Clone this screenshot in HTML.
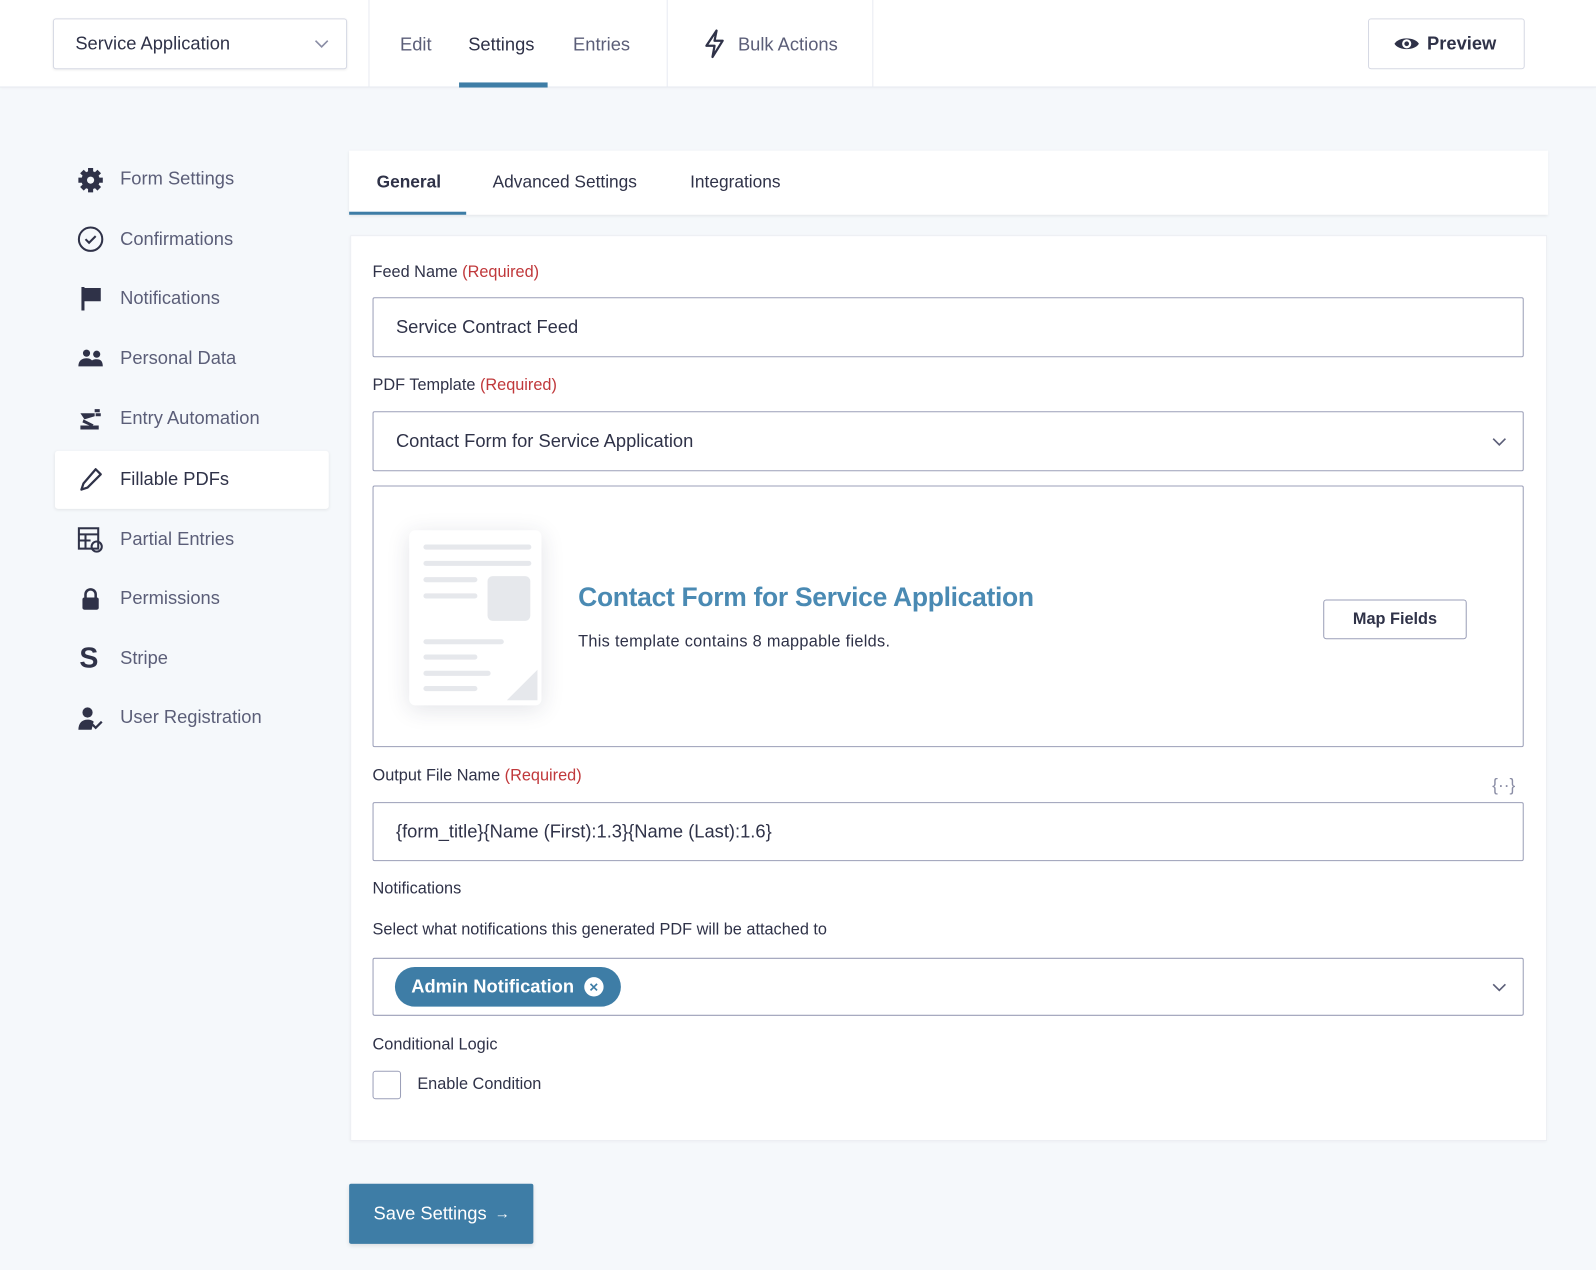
<!DOCTYPE html>
<html><head><style>
*{box-sizing:border-box;margin:0;padding:0}
html,body{width:1596px;height:1270px;overflow:hidden;background:#f5f8fb;font-family:"Liberation Sans",sans-serif;color:#2f3248}
#w{position:absolute;left:0;top:0;width:1568px;height:1248px;transform:scale(1.01786);transform-origin:0 0}
.a{position:absolute}
.hdr{left:0;top:0;width:1568px;height:86px;background:#fff;border-bottom:1px solid #e6e9f0;box-shadow:0 1px 3px rgba(0,0,0,.04)}
.vl{top:0;width:1px;height:86px;background:#e8ebf2}
.t{font-size:18px;color:#5b5e78;transform:translateY(-50%)}
.side{font-size:18px;color:#5b5e78;left:118px;transform:translateY(-50%)}
.ic{left:76px;width:26px;height:26px;transform:translateY(-50%)}
.lbl{left:366px;font-size:16px;color:#2f3248;transform:translateY(-50%)}
.req{color:#c0383b}
.inp{left:366px;width:1131px;background:#fff;border:1px solid #9b9fb8;border-radius:2px;font-size:18px;color:#2f3248;padding-left:22px;display:flex;align-items:center}
.ln{position:absolute;height:5px;background:#e6e8ec;border-radius:3px}
</style></head><body><div id="w">
<div class="a hdr"></div>
<div class="a" style="left:52px;top:18px;width:289px;height:50px;border:1px solid #d6d9e4;border-radius:3px;background:#fff;box-shadow:0 1px 2px rgba(0,0,0,.06)"></div>
<div class="a t" style="left:74px;top:43px;color:#2f3248;font-size:18px">Service Application</div>
<svg class="a" style="left:308px;top:37px" width="16" height="12"><path d="M2 3l6 6 6-6" fill="none" stroke="#8a8da5" stroke-width="1.6"/></svg>
<div class="a vl" style="left:362px"></div><div class="a vl" style="left:655px"></div><div class="a vl" style="left:857px"></div>
<div class="a t" style="left:393px;top:44px">Edit</div>
<div class="a t" style="left:460px;top:44px;color:#2f3248">Settings</div>
<div class="a t" style="left:563px;top:44px">Entries</div>
<div class="a" style="left:451px;top:81px;width:87px;height:5px;background:#3e7da6"></div>
<svg class="a" style="left:690px;top:28px" width="24" height="30" viewBox="0 0 24 30"><path d="M14 2L4 17h8l-2 11 10-16h-8z" fill="none" stroke="#2f3248" stroke-width="2.2" stroke-linejoin="round"/></svg>
<div class="a t" style="left:725px;top:44px">Bulk Actions</div>
<div class="a" style="left:1344px;top:18px;width:154px;height:50px;border:1px solid #d6d9e4;border-radius:3px;background:#fff"></div>
<svg class="a" style="left:1369px;top:33px" width="26" height="20" viewBox="0 0 26 20"><path d="M1 10C5 3 21 3 25 10C21 17 5 17 1 10Z" fill="#2f3248"/><circle cx="13" cy="10" r="4.5" fill="#fff"/><circle cx="13" cy="10" r="2.3" fill="#2f3248"/></svg>
<div class="a t" style="left:1402px;top:43px;color:#2f3248;font-weight:bold">Preview</div>

<div class="a" style="left:54px;top:443px;width:269px;height:57px;background:#fff;border-radius:3px;box-shadow:0 1px 3px rgba(0,0,0,.08)"></div>
<svg class="a ic" style="top:177px" viewBox="0 0 26 26"><circle cx="13" cy="13" r="9" fill="#2f3248"/><g stroke="#2f3248" stroke-width="5"><path d="M13 1v24M1 13h24M4.5 4.5l17 17M21.5 4.5l-17 17"/></g><circle cx="13" cy="13" r="3.5" fill="#f5f8fb"/></svg>
<div class="a side" style="top:176px">Form Settings</div>
<svg class="a ic" style="top:235px" viewBox="0 0 26 26"><circle cx="13" cy="13" r="11.5" fill="none" stroke="#2f3248" stroke-width="2"/><path d="M8 13l3.5 3.5L18 10" fill="none" stroke="#2f3248" stroke-width="2"/></svg>
<div class="a side" style="top:235px">Confirmations</div>
<svg class="a ic" style="top:293px" viewBox="0 0 26 26"><path d="M4 2h3v23H4z M7 3h16v13H7z" fill="#2f3248"/></svg>
<div class="a side" style="top:293px">Notifications</div>
<svg class="a ic" style="top:352px" viewBox="0 0 26 26"><circle cx="9" cy="8" r="3.5" fill="#2f3248"/><circle cx="19" cy="9" r="3.5" fill="#2f3248"/><path d="M1 21c0-6 4-8 8-8s7 2 7 8zM12 21c1-6 3-7 7-7s6 2 6 7z" fill="#2f3248"/></svg>
<div class="a side" style="top:352px">Personal Data</div>
<svg class="a ic" style="top:411px" viewBox="0 0 26 26"><path d="M3 20h18v4H3zM6 14l10 5-2 2-9-4zM3 8l14 0 0 3-10 3zM17 4h5v3h-5zM18 8h5v3h-5z" fill="#2f3248"/></svg>
<div class="a side" style="top:411px">Entry Automation</div>
<svg class="a ic" style="top:471px" viewBox="0 0 26 26"><path d="M18 3l5 5L10 21l-6 2 2-6z" fill="none" stroke="#2f3248" stroke-width="2.2" stroke-linejoin="round"/></svg>
<div class="a side" style="top:471px;color:#2f3248">Fillable PDFs</div>
<svg class="a ic" style="top:530px" viewBox="0 0 26 26"><rect x="1.5" y="2" width="19" height="20" fill="none" stroke="#2f3248" stroke-width="2"/><path d="M1 8h20M1 14h12M8 8v14" stroke="#2f3248" stroke-width="2"/><circle cx="19" cy="20" r="5" fill="none" stroke="#2f3248" stroke-width="2"/></svg>
<div class="a side" style="top:530px">Partial Entries</div>
<svg class="a ic" style="top:589px" viewBox="0 0 26 26"><path d="M8 11V8a5 5 0 0 1 10 0v3" fill="none" stroke="#2f3248" stroke-width="2.5"/><rect x="5" y="11" width="16" height="12" rx="2" fill="#2f3248"/></svg>
<div class="a side" style="top:588px">Permissions</div>
<div class="a" style="left:78px;top:647px;transform:translateY(-50%);font-size:28px;font-weight:bold;color:#2f3248">S</div>
<div class="a side" style="top:647px">Stripe</div>
<svg class="a ic" style="top:706px" viewBox="0 0 26 26"><circle cx="10" cy="7" r="5" fill="#2f3248"/><path d="M1 24c0-7 4-10 9-10 3 0 5 1 6 2l-2 8z" fill="#2f3248"/><path d="M15 19l3 3 6-6" fill="none" stroke="#2f3248" stroke-width="2.2"/></svg>
<div class="a side" style="top:705px">User Registration</div>

<div class="a" style="left:343px;top:148px;width:1178px;height:63px;background:#fff;box-shadow:0 1px 3px rgba(0,0,0,.08)"></div>
<div class="a" style="left:343px;top:208px;width:115px;height:3px;background:#3e7da6"></div>
<div class="a t" style="left:370px;top:179px;font-size:17px;font-weight:bold;color:#2f3248">General</div>
<div class="a t" style="left:484px;top:179px;font-size:17px;color:#2f3248">Advanced Settings</div>
<div class="a t" style="left:678px;top:179px;font-size:17px;color:#2f3248">Integrations</div>

<div class="a" style="left:344px;top:231px;width:1176px;height:890px;background:#fff;border:1px solid #eceef3;box-shadow:0 1px 3px rgba(0,0,0,.05)"></div>
<div class="a lbl" style="top:268px">Feed Name <span class="req">(Required)</span></div>
<div class="a inp" style="top:292px;height:59px">Service Contract Feed</div>
<div class="a lbl" style="top:379px">PDF Template <span class="req">(Required)</span></div>
<div class="a inp" style="top:404px;height:59px">Contact Form for Service Application</div>
<svg class="a" style="left:1465px;top:428px" width="16" height="12"><path d="M2 3l6 6 6-6" fill="none" stroke="#5b5e78" stroke-width="1.6"/></svg>
<div class="a" style="left:366px;top:477px;width:1131px;height:257px;border:1px solid #9b9fb8;border-radius:2px;background:#fff"></div>
<div class="a" style="left:402px;top:521px;width:130px;height:172px;background:#fff;border-radius:6px;box-shadow:0 4px 22px rgba(40,50,80,.13)">
<div class="ln" style="left:14px;top:14px;width:106px"></div><div class="ln" style="left:14px;top:30px;width:106px"></div>
<div class="ln" style="left:14px;top:46px;width:53px"></div><div class="ln" style="left:14px;top:62px;width:53px"></div>
<div style="position:absolute;left:77px;top:45px;width:42px;height:44px;background:#e6e8ec;border-radius:5px"></div>
<div class="ln" style="left:14px;top:107px;width:79px"></div><div class="ln" style="left:14px;top:122px;width:53px"></div>
<div class="ln" style="left:14px;top:138px;width:66px"></div><div class="ln" style="left:14px;top:153px;width:53px"></div>
<div style="position:absolute;left:96px;top:137px;width:0;height:0;border-left:30px solid transparent;border-bottom:30px solid #e6e8ec"></div>
</div>
<div class="a t" style="left:568px;top:587px;font-size:26px;letter-spacing:-0.3px;font-weight:bold;color:#4a8ab3">Contact Form for Service Application</div>
<div class="a t" style="left:568px;top:631px;font-size:16px;letter-spacing:0.3px;color:#2f3248">This template contains 8 mappable fields.</div>
<div class="a" style="left:1300px;top:589px;width:141px;height:39px;border:1px solid #9b9fb8;border-radius:3px;display:flex;align-items:center;justify-content:center;font-size:16px;font-weight:bold;color:#2f3248">Map Fields</div>
<div class="a lbl" style="top:763px">Output File Name <span class="req">(Required)</span></div>
<div class="a" style="left:1466px;top:762px;font-size:17px;color:#8a8da5">{··}</div>
<div class="a inp" style="top:788px;height:58px">{form_title}{Name (First):1.3}{Name (Last):1.6}</div>
<div class="a lbl" style="top:874px">Notifications</div>
<div class="a lbl" style="top:914px">Select what notifications this generated PDF will be attached to</div>
<div class="a inp" style="top:941px;height:57px"></div>
<div class="a" style="left:388px;top:950px;width:222px;height:39px;border-radius:20px;background:#3e7da6;color:#fff;font-size:18px;font-weight:bold;display:flex;align-items:center;padding-left:16px">Admin Notification<span style="margin-left:10px;width:19px;height:19px;border-radius:50%;background:#fff;color:#3e7da6;font-size:12px;display:flex;align-items:center;justify-content:center">✕</span></div>
<svg class="a" style="left:1465px;top:964px" width="16" height="12"><path d="M2 3l6 6 6-6" fill="none" stroke="#5b5e78" stroke-width="1.6"/></svg>
<div class="a lbl" style="top:1027px">Conditional Logic</div>
<div class="a" style="left:366px;top:1052px;width:28px;height:28px;border:1px solid #9b9fb8;border-radius:3px"></div>
<div class="a lbl" style="left:410px;top:1066px">Enable Condition</div>
<div class="a" style="left:343px;top:1163px;width:181px;height:59px;background:#3e7da6;border-radius:2px;color:#fff;font-size:18px;display:flex;align-items:center;padding-left:24px;box-shadow:0 2px 4px rgba(0,0,0,.1)">Save Settings <span style="margin-left:8px;font-size:15px">→</span></div>
</div></body></html>
